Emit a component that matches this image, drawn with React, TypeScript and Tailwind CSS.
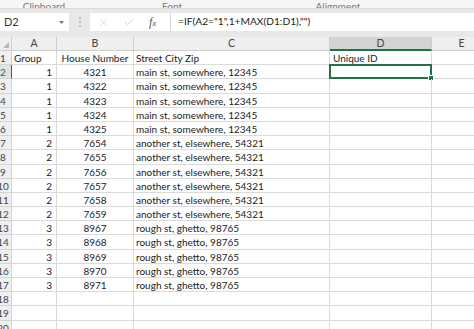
import { X, Check } from 'lucide-react';

type Row = { a: string; b: string; c: string; d: string };

const rows: Row[] = [{ a: 'Group', b: 'House Number', c: 'Street City Zip', d: 'Unique ID' }];
[4321, 4322, 4323, 4324, 4325].forEach((n) => rows.push({ a: '1', b: String(n), c: 'main st, somewhere, 12345', d: '' }));
[7654, 7655, 7656, 7657, 7658, 7659].forEach((n) => rows.push({ a: '2', b: String(n), c: 'another st, elsewhere, 54321', d: '' }));
[8967, 8968, 8969, 8970, 8971].forEach((n) => rows.push({ a: '3', b: String(n), c: 'rough st, ghetto, 98765', d: '' }));
while (rows.length < 20) rows.push({ a: '', b: '', c: '', d: '' });

function RowHead({ n, active }: { n: number; active?: boolean }) {
  return (
    <div
      className={`w-[12px] shrink-0 overflow-hidden border-b border-r ${
        active ? 'border-r-[#217346] bg-[#e1e1e1] text-[#217346]' : 'border-[#d4d4d4] bg-[#efefef] text-[#444]'
      } border-b-[#d4d4d4]`}
    >
      <div className="-ml-[6px] w-[18px] text-center leading-[14px]">{n}</div>
    </div>
  );
}

export default function App() {
  return (
    <div className="w-[474px] h-[329px] overflow-hidden bg-[#e8e8e8] text-[10px] text-[#222] font-[family-name:Lato,sans-serif]">
      {/* ribbon group labels, cut off at the top */}
      <div className="h-[9px] overflow-hidden bg-[#f6f6f6] border-b border-[#dadada] flex items-end text-[#777] text-[10px] leading-[12px]">
        <div className="-ml-[10px] w-[108px] shrink-0 text-center -mb-[4px]">Clipboard</div>
        <div className="w-[148px] shrink-0 text-center -mb-[4px]">Font</div>
        <div className="w-[184px] shrink-0 text-center -mb-[4px]">Alignment</div>
      </div>

      {/* formula bar */}
      <div className="h-[28px] flex items-start pt-[4px]">
        <div className="w-[69px] h-[18px] bg-white flex items-center justify-between pl-[4px] pr-[5px] text-[11px] text-[#333]">
          <span>D2</span>
          <svg width="5" height="3" viewBox="0 0 5 3"><path d="M0 0h5L2.5 3z" fill="#777" /></svg>
        </div>
        <div className="w-[21px] h-[18px] flex flex-col items-center justify-center gap-[2px]">
          <span className="w-[2px] h-[2px] bg-[#bcbcbc]" />
          <span className="w-[2px] h-[2px] bg-[#bcbcbc]" />
          <span className="w-[2px] h-[2px] bg-[#bcbcbc]" />
        </div>
        <div className="w-[81px] h-[18px] bg-white flex items-center border-r border-[#d6d6d6]">
          <X size={11} strokeWidth={1.3} className="ml-[8px] text-[#b9b9b9]" />
          <Check size={12} strokeWidth={1.3} className="ml-[14px] text-[#b9b9b9]" />
          <span className="ml-[14px] italic text-[#555] text-[12px] font-[family-name:'Liberation_Serif',serif]">
            f<span className="text-[9px]">x</span>
          </span>
        </div>
        <div className="flex-1 h-[18px] bg-white flex items-center pl-[7px] text-[10.2px] text-[#222]">
          =IF(A2="1",1+MAX(D1:D1),"")
        </div>
      </div>

      {/* column headers */}
      <div className="flex h-[14px] bg-[#efefef] text-[#444] leading-[13px] text-[10.5px]">
        <div className="w-[12px] shrink-0 border-r border-b border-[#cfcfcf] flex items-end justify-end pr-[2px] pb-[2px]">
          <svg width="6" height="6" viewBox="0 0 6 6"><path d="M6 0v6H0z" fill="#b8b8b8" /></svg>
        </div>
        <div className="w-[45px] shrink-0 border-r border-b border-[#cfcfcf] text-center">A</div>
        <div className="w-[77px] shrink-0 border-r border-b border-[#cfcfcf] text-center">B</div>
        <div className="w-[196px] shrink-0 border-r border-b border-[#cfcfcf] text-center">C</div>
        <div className="w-[102px] shrink-0 border-r border-[#cfcfcf] border-b-2 border-b-[#217346] bg-[#d4d4d4] text-center">D</div>
        <div className="w-[60px] shrink-0 border-r border-b border-[#cfcfcf] text-center">E</div>
      </div>

      {/* grid */}
      <div className="bg-white">
        {rows.map((r, i) => (
          <div key={i} className="flex h-[14.2px] leading-[14px]">
            <RowHead n={i + 1} active={i === 1} />
            <div className="w-[45px] shrink-0 border-r border-b border-[#dadada] pl-[2px] pr-[4px] overflow-hidden whitespace-nowrap">
              <div className={i === 0 ? 'text-left' : 'text-right'}>{r.a}</div>
            </div>
            <div className="w-[77px] shrink-0 border-r border-b border-[#dadada] text-center overflow-hidden whitespace-nowrap">
              {r.b}
            </div>
            <div className="w-[196px] shrink-0 border-r border-b border-[#dadada] pl-[2px] overflow-hidden whitespace-nowrap">
              {r.c}
            </div>
            <div className="w-[102px] shrink-0 border-r border-b border-[#dadada] pl-[3px] relative whitespace-nowrap">
              {r.d}
              {i === 1 && (
                <div className="absolute -left-px -top-px -right-px -bottom-px border-2 border-[#217346]">
                  <div className="absolute -right-[4px] -bottom-[4px] w-[6px] h-[6px] bg-[#217346] border border-white" />
                </div>
              )}
            </div>
            <div className="w-[60px] shrink-0 border-r border-b border-[#dadada]" />
          </div>
        ))}
      </div>
    </div>
  );
}
